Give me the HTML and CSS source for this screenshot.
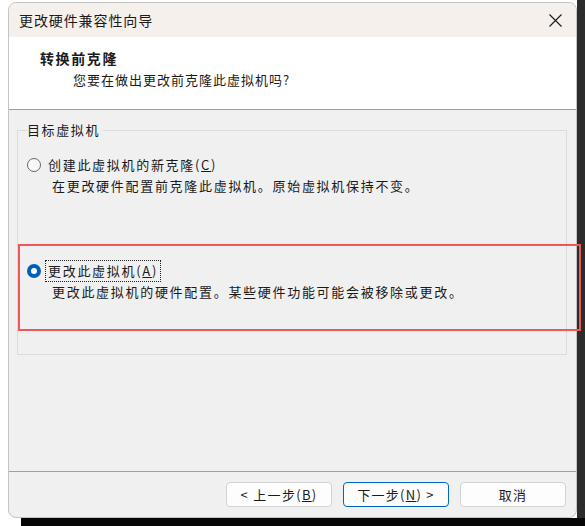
FILE: index.html
```html
<!DOCTYPE html>
<html lang="zh-CN">
<head>
  <meta charset="UTF-8">
  <title>更改硬件兼容性向导</title>
  <link rel="stylesheet" href="styles.css">
</head>
<body>
  <div class="backdrop-right"></div>
  <div class="backdrop-bottom"></div>

  <div class="window">
    <div class="titlebar">
      <span class="title">更改硬件兼容性向导</span>
      <svg class="close" width="13" height="13" viewBox="0 0 13 13">
        <path d="M0.5 0.5 L12.5 12.5 M12.5 0.5 L0.5 12.5" stroke="#1a1a1a" stroke-width="1.1" fill="none"/>
      </svg>
    </div>

    <div class="header">
      <div class="header-title">转换前克隆</div>
      <div class="header-sub">您要在做出更改前克隆此虚拟机吗?</div>
    </div>

    <div class="content">
      <fieldset class="group">
        <legend>目标虚拟机</legend>

        <div class="option">
          <span class="radio"></span>
          <span class="option-label">创建此虚拟机的新克隆(<u>C</u>)</span>
        </div>
        <div class="option-desc">在更改硬件配置前克隆此虚拟机。原始虚拟机保持不变。</div>

        <div class="option option-second">
          <span class="radio checked"></span>
          <span class="option-label focused">更改此虚拟机(<u>A</u>)</span>
        </div>
        <div class="option-desc">更改此虚拟机的硬件配置。某些硬件功能可能会被移除或更改。</div>
      </fieldset>
    </div>

    <div class="footer">
      <button class="btn">&lt; 上一步(<u>B</u>)</button>
      <button class="btn btn-default">下一步(<u>N</u>) &gt;</button>
      <button class="btn">取消</button>
    </div>
  </div>

  <div class="highlight"></div>
</body>
</html>
```

FILE: styles.css
```css
* { box-sizing: border-box; }
body { margin: 0; width: 585px; height: 526px; position: relative; overflow: hidden; background: #fff; font-family: "Noto Sans CJK SC", "Microsoft YaHei", sans-serif; color: #1a1a1a; }

/* what lies behind the dialog */
.backdrop-right { position: absolute; left: 577px; top: 0; right: 0; bottom: 0; background: #2c2c2c; }
.backdrop-bottom { position: absolute; left: 21px; top: 518px; right: 0; bottom: 0; background: #060606; }

.window { position: relative; margin: 2px 0 0 8px; width: 569px; height: 516px; border: 1px solid #c4c4c4; border-radius: 8px; background: #f0f0f0; display: flex; flex-direction: column; overflow: hidden; }

.titlebar { height: 34px; flex: none; background: #f5f0ec; display: flex; align-items: center; justify-content: space-between; padding: 0 14px 0 10px; }
.title { font-size: 14px; letter-spacing: 0.9px; }
.close { display: block; }

.header { height: 73px; flex: none; background: #fff; border-bottom: 1px solid #a0a0a0; padding: 12px 0 0 31px; }
.header-title { font-size: 14px; font-weight: bold; letter-spacing: 1.6px; line-height: 18px; }
.header-sub { font-size: 13px; letter-spacing: 1px; line-height: 18px; margin: 4px 0 0 33px; }

.content { flex: 1; padding: 11px 9px 0 8px; }
.group { margin: 0; height: 234px; border: 1px solid #dcdcdc; padding: 0 0 0 9px; }
.group legend { font-size: 13px; letter-spacing: 1.6px; line-height: 18px; padding: 0 3px 0 0; margin-left: 0; }

.option { display: flex; align-items: center; margin-top: 15px; height: 22px; font-size: 13px; letter-spacing: 1.7px; }
.option-second { margin-top: 64px; }
.option-label { margin-left: 5px; padding: 0 2px; line-height: 20px; }
.focused { outline: 1px dotted #222; outline-offset: 0; }
.option-desc { font-size: 13px; letter-spacing: 1.7px; line-height: 20px; margin-left: 25px; }

.radio { width: 14px; height: 14px; flex: none; border-radius: 50%; border: 1px solid #666; background: #f8f8f8; }
.radio.checked { border: 4px solid #005fb8; background: #fff; }

.footer { height: 46px; flex: none; border-top: 1px solid #a0a0a0; display: flex; justify-content: flex-end; gap: 11px; padding: 10px 10px 0 0; }
.btn { width: 106px; height: 25px; border: 1px solid #d3d3d3; border-radius: 4px; background: #fdfdfd; font-family: inherit; font-size: 13px; letter-spacing: 1.3px; color: #1a1a1a; padding: 0; }
.btn-default { border-color: #0067c0; }

/* annotation drawn over the screenshot */
.highlight { position: absolute; left: 18px; top: 244px; width: 563px; height: 87px; border: 2px solid #f05858; }
```
